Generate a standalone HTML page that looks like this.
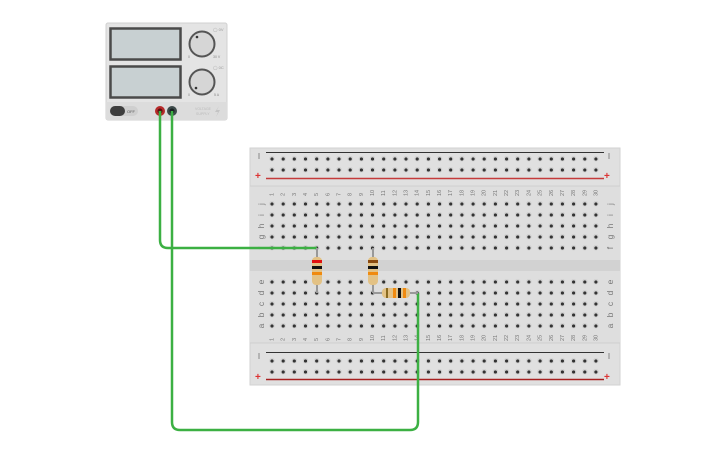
<!DOCTYPE html>
<html><head><meta charset="utf-8"><style>
body{margin:0;width:725px;height:453px;background:#fff;overflow:hidden;font-family:"Liberation Sans",sans-serif}
svg{position:absolute;left:0;top:0}
</style></head><body>
<svg id="s" width="725" height="453" viewBox="0 0 725 453" xmlns="http://www.w3.org/2000/svg">
<rect x="106" y="23" width="121" height="97" rx="2" fill="#e4e4e4" stroke="#d0d0d0"/>
<rect x="106" y="102" width="121" height="18" fill="#dcdcdc"/>
<rect x="110.5" y="28.5" width="70" height="31" fill="#c8d0d2" stroke="#4a4a4a" stroke-width="2.5"/>
<rect x="110.5" y="66.5" width="70" height="31" fill="#c8d0d2" stroke="#4a4a4a" stroke-width="2.5"/>
<circle cx="202" cy="44" r="12.5" fill="#d6d6d6" stroke="#555" stroke-width="2"/>
<circle cx="197" cy="37" r="1.3" fill="#333"/>
<circle cx="202" cy="82" r="12.5" fill="#d6d6d6" stroke="#555" stroke-width="2"/>
<circle cx="196" cy="88" r="1.3" fill="#333"/>
<text x="213" y="31" font-size="4" fill="#999">◯ 0V</text>
<text x="213" y="69" font-size="4" fill="#999">◯ 0C</text>
<text x="188" y="58" font-size="3.5" fill="#888">0</text><text x="213" y="58" font-size="3.5" fill="#888">30 V</text>
<text x="188" y="96" font-size="3.5" fill="#888">0</text><text x="214" y="96" font-size="3.5" fill="#888">5 A</text>
<rect x="110" y="106" width="28" height="10" rx="5" fill="#cfcfcf"/>
<rect x="110" y="106" width="15" height="10" rx="5" fill="#3e3e3e"/>
<text x="127" y="113" font-size="4" fill="#555">OFF</text>
<circle cx="160" cy="111" r="5" fill="#b62a2a"/><circle cx="160" cy="111" r="2.5" fill="#5a1010"/>
<circle cx="172" cy="111" r="5" fill="#3d4a4a"/><circle cx="172" cy="111" r="2.5" fill="#1a2222"/>
<text x="195" y="110" font-size="3.5" fill="#bbb">VOLTAGE</text><text x="196" y="115" font-size="3.5" fill="#bbb">SUPPLY</text>
<path d="M219 106 L215 112 H218 L216 117 L220 110 H217 Z" fill="#c4c4c4"/>
<rect x="250" y="148" width="370" height="237" fill="#e0e0e0" stroke="#d2d2d2"/>
<rect x="250" y="186" width="370" height="157" fill="#dedede"/>
<line x1="250" y1="186" x2="620" y2="186" stroke="#cfcfcf"/>
<line x1="250" y1="343" x2="620" y2="343" stroke="#cfcfcf"/>
<rect x="250" y="260" width="370" height="11" fill="#d2d2d2"/>
<line x1="266" y1="152.5" x2="604" y2="152.5" stroke="#333" stroke-width="1"/>
<line x1="266" y1="178.5" x2="604" y2="178.5" stroke="#c43b3b" stroke-width="1.5"/>
<line x1="266" y1="352.5" x2="604" y2="352.5" stroke="#333" stroke-width="1"/>
<line x1="266" y1="379.5" x2="604" y2="379.5" stroke="#a62020" stroke-width="1.5"/>
<g stroke="#888" stroke-width="1"><line x1="259" y1="153" x2="259" y2="159"/><line x1="609" y1="153" x2="609" y2="159"/><line x1="259" y1="353" x2="259" y2="359"/><line x1="609" y1="353" x2="609" y2="359"/></g>
<g font-size="10" fill="#d33" font-weight="bold"><text x="255" y="179">+</text><text x="604" y="179">+</text><text x="255" y="380">+</text><text x="604" y="380">+</text></g>
<g id="holes"></g>
<path d="M160 111 V240 Q160 248 168 248 H317" fill="none" stroke="#3cb043" stroke-width="2.5"/>
<path d="M172 111 V422 Q172 430 180 430 H410 Q418 430 418 422 V293" fill="none" stroke="#3cb043" stroke-width="2.5"/>
<g stroke="#999" stroke-width="2"><line x1="317" y1="248" x2="317" y2="293"/><line x1="373" y1="248" x2="373" y2="282"/><line x1="373" y1="282" x2="373" y2="293"/><line x1="373" y1="293" x2="418" y2="293"/></g>
<rect x="312" y="257" width="10" height="28" rx="4" fill="#e3c285"/>
<rect x="312" y="260" width="10" height="3" fill="#e01010"/><rect x="312" y="266" width="10" height="3" fill="#111"/><rect x="312" y="272" width="10" height="3" fill="#f08a10"/>
<rect x="368" y="257" width="10" height="28" rx="4" fill="#e3c285"/>
<rect x="368" y="260" width="10" height="3" fill="#8a4a10"/><rect x="368" y="266" width="10" height="3" fill="#111"/><rect x="368" y="272" width="10" height="3" fill="#f08a10"/>
<rect x="382" y="288" width="28" height="10" rx="4" fill="#e3c285"/>
<rect x="386" y="288" width="2" height="10" fill="#8a6a20"/><rect x="393" y="288" width="3" height="10" fill="#f08a10"/><rect x="398" y="288" width="3" height="10" fill="#111"/><rect x="403" y="288" width="3" height="10" fill="#f08a10"/>
</svg>
<script>
var g=document.getElementById('holes'),h='';
function X(c){return 272+c*11.17}
for(var c=0;c<30;c++){var x=X(c);
[159,170,204,215,226,237,248,282,293,304,315,326,361,372].forEach(function(y){h+='<circle cx="'+x.toFixed(1)+'" cy="'+y+'" r="1.6" fill="#333"/><circle cx="'+x.toFixed(1)+'" cy="'+(y-0.3)+'" r="2.4" fill="none" stroke="#ccc" stroke-width="0.6"/>';});
h+='<text transform="translate('+(x+1.5).toFixed(1)+',196) rotate(-90)" font-size="5.5" fill="#777">'+(c+1)+'</text>';
h+='<text transform="translate('+(x+1.5).toFixed(1)+',341) rotate(-90)" font-size="5.5" fill="#777">'+(c+1)+'</text>';}
var L=['j','i','h','g','f'],Y=[204,215,226,237,248];
for(var i=0;i<5;i++){h+='<text transform="translate(264,'+Y[i]+') rotate(-90)" font-size="8.5" fill="#777" text-anchor="middle">'+L[i]+'</text><text transform="translate(613,'+Y[i]+') rotate(-90)" font-size="8.5" fill="#777" text-anchor="middle">'+L[i]+'</text>';}
L=['e','d','c','b','a'];Y=[282,293,304,315,326];
for(var i=0;i<5;i++){h+='<text transform="translate(264,'+Y[i]+') rotate(-90)" font-size="8.5" fill="#777" text-anchor="middle">'+L[i]+'</text><text transform="translate(613,'+Y[i]+') rotate(-90)" font-size="8.5" fill="#777" text-anchor="middle">'+L[i]+'</text>';}
g.innerHTML=h;
</script>
</body></html>
